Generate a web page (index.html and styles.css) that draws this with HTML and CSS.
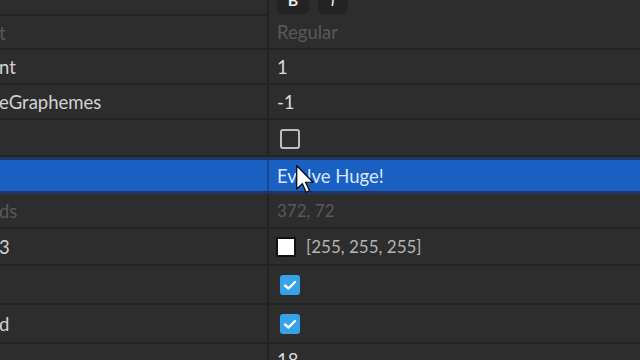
FILE: index.html
```html
<!DOCTYPE html>
<html lang="en">
<head>
    <meta charset="UTF-8">
    <meta name="viewport" content="width=device-width, initial-scale=1.0">
    <title>Properties</title>
    <link rel="stylesheet" href="styles.css">
</head>
<body>
    <div class="props">
        <!-- Font: style buttons + weight -->
        <div class="row head">
            <div class="label split">
                <div class="label-top"></div>
                <div class="label-sub dim">t</div>
            </div>
            <div class="value stack">
                <div class="style-buttons">
                    <span class="style-btn bold">B</span>
                    <span class="style-btn italic">I</span>
                </div>
                <div class="value-line dim">Regular</div>
            </div>
        </div>
        <div class="row h35">
            <div class="label">nt</div>
            <div class="value">1</div>
        </div>
        <div class="row h35">
            <div class="label">eGraphemes</div>
            <div class="value">-1</div>
        </div>
        <div class="row h36">
            <div class="label"></div>
            <div class="value"><span class="check"></span></div>
        </div>
        <div class="row selected">
            <div class="label"></div>
            <div class="value">Evolve Huge!</div>
        </div>
        <div class="row h35">
            <div class="label dim">ds</div>
            <div class="value dim num">372, 72</div>
        </div>
        <div class="row h37">
            <div class="label">3</div>
            <div class="value"><span class="swatch"></span><span class="rgb num">[255, 255, 255]</span></div>
        </div>
        <div class="row h39">
            <div class="label"></div>
            <div class="value"><span class="check on"><svg viewBox="0 0 20 20" width="20" height="20"><path d="M5 10.5 L8.5 13.5 L15 7" fill="none" stroke="#fff" stroke-width="2.4" stroke-linecap="round" stroke-linejoin="round"/></svg></span></div>
        </div>
        <div class="row h39">
            <div class="label">d</div>
            <div class="value"><span class="check on"><svg viewBox="0 0 20 20" width="20" height="20"><path d="M5 10.5 L8.5 13.5 L15 7" fill="none" stroke="#fff" stroke-width="2.4" stroke-linecap="round" stroke-linejoin="round"/></svg></span></div>
        </div>
        <div class="row last">
            <div class="label"></div>
            <div class="value top">18</div>
        </div>
    </div>

    <svg class="cursor" viewBox="0 0 12 19" width="18" height="28.5">
        <path d="M0.5 0.5 L0.5 16 L4.2 12.4 L6.8 18.2 L9 17.2 L6.4 11.5 L11.4 11.5 Z" fill="#fff" stroke="#000" stroke-width="0.8" stroke-linejoin="round"/>
    </svg>
</body>
</html>
```

FILE: styles.css
```css
body {
    margin: 0;
    background-color: #2d2d2d;
    font-family: 'Lato', 'Open Sans', sans-serif;
    font-size: 18.5px;
    color: #dadada;
    width: 640px;
    height: 360px;
    overflow: hidden;
    position: relative;
}
.props {
    display: flex;
    flex-direction: column;
}
.row {
    display: grid;
    grid-template-columns: 269px 1fr;
    box-sizing: border-box;
    border-bottom: 2px solid #232323;
}
.h35 { height: 35px; }
.h36 { height: 37px; }
.h37 { height: 37px; }
.h39 { height: 39px; }
.head { height: 50px; }
.last { height: 40px; border-bottom: none; }
.label {
    border-right: 2px solid #222;
    display: flex;
    align-items: center;
    overflow: hidden;
    white-space: nowrap;
    margin-left: -1px;
    color: #d2d2d2;
}
.value {
    display: flex;
    align-items: center;
    gap: 10px;
    padding-left: 8px;
    white-space: nowrap;
}
.value.top {
    align-items: flex-start;
    padding-top: 5px;
}
.num {
    font-size: 17px;
}
.dim {
    color: #595959;
}
.label.split {
    flex-direction: column;
    align-items: stretch;
}
.label-top {
    height: 14px;
    border-bottom: 2px solid #242424;
}
.label-sub {
    flex: 1;
    display: flex;
    align-items: center;
    padding-top: 2px;
}
.value.stack {
    flex-direction: column;
    align-items: flex-start;
    gap: 0;
}
.style-buttons {
    display: flex;
    gap: 9px;
    margin-top: -16px;
}
.style-btn {
    width: 32px;
    height: 30px;
    border-radius: 5px;
    background-color: #232323;
    color: #e8e8e8;
    display: flex;
    align-items: center;
    justify-content: center;
    font-size: 16px;
}
.style-btn.bold {
    font-weight: 700;
}
.style-btn.italic {
    width: 30px;
    font-style: italic;
}
.value-line {
    margin-top: 7px;
}
.check {
    width: 16px;
    height: 16px;
    border: 2px solid #bdbdbd;
    border-radius: 3px;
    margin-left: 3px;
    margin-top: 3px;
}
.check.on {
    width: 20px;
    height: 20px;
    border: none;
    border-radius: 3px;
    background-color: #35a2ea;
    display: flex;
    margin-top: 1px;
}
.swatch {
    width: 16px;
    height: 16px;
    background-color: #ffffff;
    border: 2px solid #111;
    border-radius: 1px;
    margin-left: -1px;
}
.rgb {
    color: #b4b4b4;
}
.selected {
    height: 37px;
    background-color: #1a60c2;
    border-top: 3px solid #1c3764;
    border-bottom: 3px solid #1c3764;
}
.selected .label {
    border-right-color: #184a93;
}
.selected .value {
    color: #d9e8ff;
}
.cursor {
    position: absolute;
    left: 296px;
    top: 165px;
}
```
